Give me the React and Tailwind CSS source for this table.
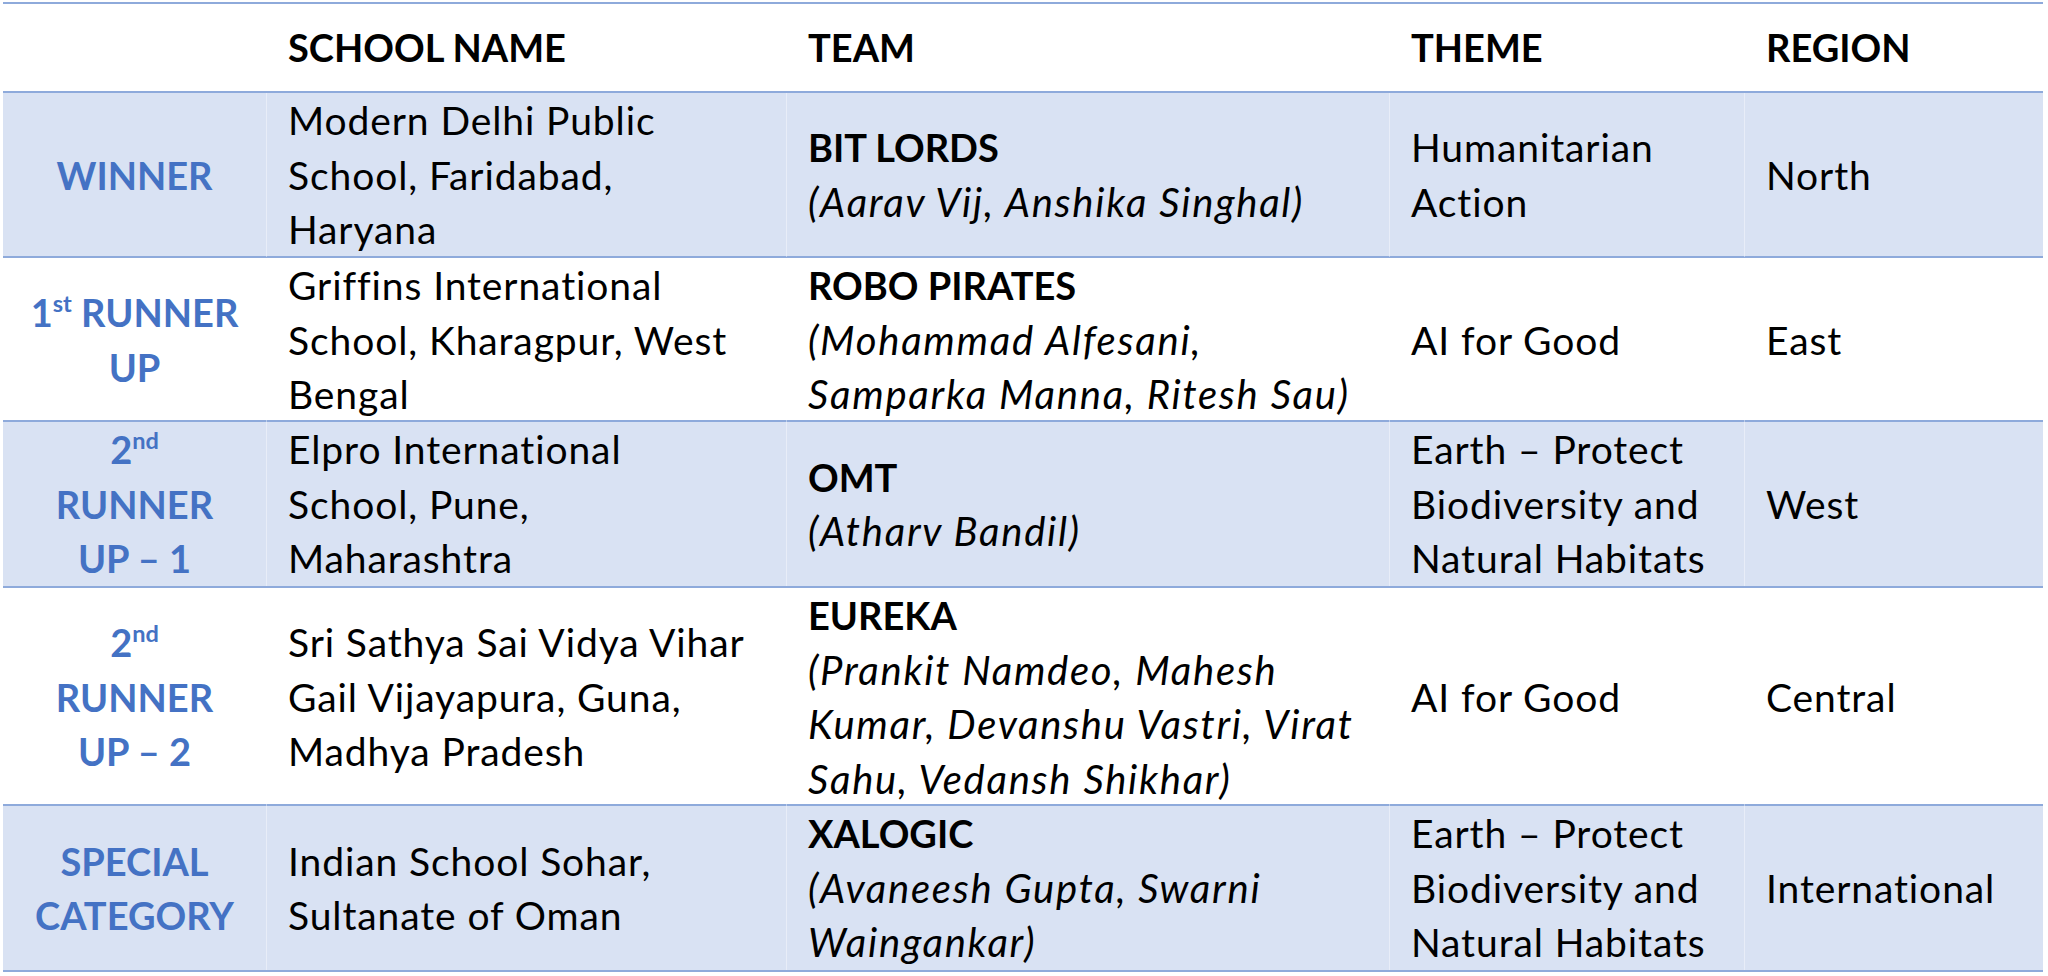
import React from "react";

const rows = [
  {
    h: "h-[165px]",
    shaded: true,
    label: [<>WINNER</>],
    school: ["Modern Delhi Public", "School, Faridabad,", "Haryana"],
    team: "BIT LORDS",
    members: ["(Aarav Vij, Anshika Singhal)"],
    theme: ["Humanitarian", "Action"],
    region: "North",
  },
  {
    h: "h-[164px]",
    shaded: false,
    label: [
      <>
        1<sup className="text-[0.62em] top-[-0.66em]">st</sup> RUNNER
      </>,
      <>UP</>,
    ],
    school: ["Griffins International", "School, Kharagpur, West", "Bengal"],
    team: "ROBO PIRATES",
    members: ["(Mohammad Alfesani,", "Samparka Manna, Ritesh Sau)"],
    theme: ["AI for Good"],
    region: "East",
  },
  {
    h: "h-[166px]",
    shaded: true,
    label: [
      <>
        2<sup className="text-[0.62em] top-[-0.66em]">nd</sup>
      </>,
      <>RUNNER</>,
      <>UP – 1</>,
    ],
    school: ["Elpro International", "School, Pune,", "Maharashtra"],
    team: "OMT",
    members: ["(Atharv Bandil)"],
    theme: ["Earth – Protect", "Biodiversity and", "Natural Habitats"],
    region: "West",
  },
  {
    h: "h-[218px]",
    shaded: false,
    label: [
      <>
        2<sup className="text-[0.62em] top-[-0.66em]">nd</sup>
      </>,
      <>RUNNER</>,
      <>UP – 2</>,
    ],
    school: ["Sri Sathya Sai Vidya Vihar", "Gail Vijayapura, Guna,", "Madhya Pradesh"],
    team: "EUREKA",
    members: ["(Prankit Namdeo, Mahesh", "Kumar, Devanshu Vastri, Virat", "Sahu, Vedansh Shikhar)"],
    theme: ["AI for Good"],
    region: "Central",
  },
  {
    h: "h-[166px]",
    shaded: true,
    label: [<>SPECIAL</>, <>CATEGORY</>],
    school: ["Indian School Sohar,", "Sultanate of Oman"],
    team: "XALOGIC",
    members: ["(Avaneesh Gupta, Swarni", "Waingankar)"],
    theme: ["Earth – Protect", "Biodiversity and", "Natural Habitats"],
    region: "International",
  },
];

const grid =
  "grid grid-cols-[264px_520px_603px_355px_298px] border-b-2 border-[#8eaadb]";
const cell =
  "flex flex-col justify-center pl-[21px] whitespace-nowrap border-r border-white/40 last:border-r-0";
const reg = "text-[39px] tracking-[0.9px]";

export default function App() {
  return (
    <div className="w-[2048px] h-[976px] bg-white font-['Lato',sans-serif] text-[38px] leading-[54.5px] text-black">
      <div className="ml-[3px] mt-[2px] w-[2040px]">
        <div className={`${grid} border-t-2 h-[91px] font-bold`}>
          <div className={cell}></div>
          <div className={cell}>SCHOOL NAME</div>
          <div className={cell}>TEAM</div>
          <div className={cell}>THEME</div>
          <div className={cell}>REGION</div>
        </div>
        {rows.map((r, i) => (
          <div
            key={i}
            className={`${grid} ${r.h} ${r.shaded ? "bg-[#d9e2f3]" : "bg-white"}`}
          >
            <div className="flex flex-col justify-center items-center text-center font-bold text-[#4472c4] whitespace-nowrap border-r border-white/40">
              {r.label.map((l, j) => (
                <div key={j}>{l}</div>
              ))}
            </div>
            <div className={`${cell} ${reg}`}>
              {r.school.map((s, j) => (
                <div key={j}>{s}</div>
              ))}
            </div>
            <div className={cell}>
              <div className="font-bold">{r.team}</div>
              {r.members.map((m, j) => (
                <div key={j} className="italic text-[40px] tracking-[1.75px]">
                  {m}
                </div>
              ))}
            </div>
            <div className={`${cell} ${reg}`}>
              {r.theme.map((t, j) => (
                <div key={j}>{t}</div>
              ))}
            </div>
            <div className={`${cell} ${reg}`}>{r.region}</div>
          </div>
        ))}
      </div>
    </div>
  );
}
